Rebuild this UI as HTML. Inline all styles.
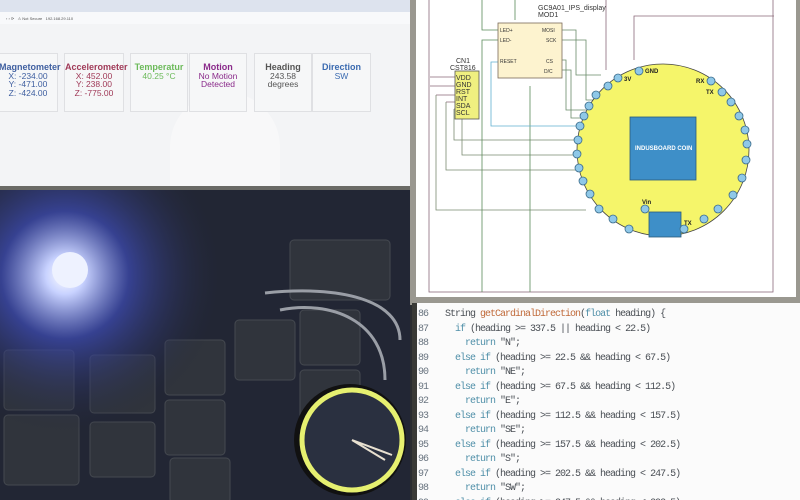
<!DOCTYPE html>
<html><head><meta charset="utf-8"><style>
*{margin:0;padding:0;box-sizing:border-box}
html,body{width:800px;height:500px;overflow:hidden}
body{background:#2a2c30;position:relative;font-family:"Liberation Sans",sans-serif}
.abs{position:absolute}
#web{left:0;top:0;width:410px;height:186px;background:#f3f4f6}
.card{position:absolute;top:53px;height:59px;border:1px solid #dfe0e3;background:#f6f7f8;text-align:center;font-size:8.5px;line-height:8.5px}
.card b{display:block;font-size:9px}
#code{left:412px;top:303px;width:388px;height:197px;background:#fbfbfb;border-left:5px solid #3a3a36;font-family:"Liberation Mono",monospace;font-size:10px;letter-spacing:-1px;color:#4a4f55;overflow:hidden}
.ln{position:absolute;left:1px;color:#6a7580}
.cl{position:absolute;left:28px;white-space:pre}
.fn{color:#c06a3a}.kw{color:#4f8fa8}
</style></head><body>
<div id="web" class="abs">
 <div class="abs" style="left:0;top:0;width:410px;height:12px;background:#dde3ee"></div>
 <div class="abs" style="left:0;top:12px;width:410px;height:12px;background:#f8f9fb;font-size:4px;color:#555;padding:4px 0 0 6px">‹ › ⟳ &nbsp; ⚠ Not Secure &nbsp; 192.168.29.110</div>
 <div class="abs" style="left:170px;top:92px;width:110px;height:94px;border-radius:55px 55px 0 0;background:#f8f8f9"></div>
 <div class="card" style="left:-2px;width:60px;color:#3f5fa0;padding-top:9px"><b>Magnetometer</b>X: -234.00<br>Y: -471.00<br>Z: -424.00</div>
 <div class="card" style="left:64px;width:60px;color:#a03a58;padding-top:9px"><b>Accelerometer</b>X: 452.00<br>Y: 238.00<br>Z: -775.00</div>
 <div class="card" style="left:130px;width:58px;color:#6cba5a;padding-top:9px"><b>Temperatur</b>40.25 °C</div>
 <div class="card" style="left:189px;width:58px;color:#8a2a8a;padding-top:9px"><b>Motion</b>No Motion<br>Detected</div>
 <div class="card" style="left:254px;width:58px;color:#555;padding-top:9px"><b>Heading</b>243.58<br>degrees</div>
 <div class="card" style="left:312px;width:59px;color:#3a6ab0;padding-top:9px"><b>Direction</b>SW</div>
</div>
<div class="abs" style="left:0;top:186px;width:410px;height:4px;background:#6a6a66"></div>
<div class="abs" style="left:0;top:190px;width:410px;height:310px;background:#222634;overflow:hidden">
 <svg width="410" height="310">
  <defs><radialGradient id="g"><stop offset="0" stop-color="#ffffff"/><stop offset=".12" stop-color="#c8d2ff"/><stop offset=".4" stop-color="#3b48a8" stop-opacity=".8"/><stop offset="1" stop-color="#222634" stop-opacity="0"/></radialGradient></defs>
  <g fill="#30343c" stroke="#454950">
   <rect x="4" y="160" width="70" height="60" rx="4"/><rect x="90" y="165" width="65" height="58" rx="4"/>
   <rect x="4" y="225" width="75" height="70" rx="4"/><rect x="90" y="232" width="65" height="55" rx="4"/>
   <rect x="165" y="150" width="60" height="55" rx="4"/><rect x="165" y="210" width="60" height="55" rx="4"/>
   <rect x="170" y="268" width="60" height="45" rx="4"/><rect x="235" y="130" width="60" height="60" rx="4"/>
   <rect x="300" y="120" width="60" height="55" rx="4"/><rect x="300" y="180" width="60" height="50" rx="4"/>
   <rect x="290" y="50" width="100" height="60" rx="4"/>
  </g>
  <circle cx="65" cy="85" r="160" fill="url(#g)"/>
  <circle cx="70" cy="80" r="18" fill="#eef2ff"/>
  <path d="M265 103 C340 95 400 110 400 150 M280 120 C330 110 385 130 385 190" stroke="#9a9ea6" stroke-width="3" fill="none"/>
  <circle cx="350" cy="250" r="56" fill="#111"/>
  <circle cx="352" cy="250" r="50" fill="#2a3040" stroke="#e6f070" stroke-width="5"/>
  <path d="M352 250 L392 265 M352 250 L385 270" stroke="#e8e0d0" stroke-width="2"/>
 </svg>
</div>
<div class="abs" style="left:410px;top:0;width:390px;height:305px;background:#9a9890"></div>
<div class="abs" style="left:416px;top:0;width:380px;height:297px;background:#fff;overflow:hidden">
 <svg width="380" height="297" fill="none" stroke-width="0.8">
  <rect x="13" y="-2" width="344" height="294" stroke="#8a6a7a"/>
  <path d="M14 77 H50 M14 86 H50 M20 95 H50 M30 102 H50 M38 109 H50 M46 116 H50" stroke="#8a6a7a"/>
  <path d="M20 95 V210 H170 M30 102 V170 H180 M38 109 V140 H175 M46 116 V155 H180" stroke="#7a8a70"/>
  <path d="M66 0 V30 H82 M82 40 H66 V292 M99 0 V20 M114 86 V292" stroke="#5a8a5a"/>
  <path d="M82 62 H75 V126 H175" stroke="#60b0d0"/>
  <path d="M142 30 H160 V75 H185 M142 40 H170 V100 H185 M142 60 H150 V110 H170 M142 70 H155 V118 H170" stroke="#6a8a6a"/>
  <path d="M190 0 V70 M218 60 V16 H358" stroke="#8a6a7a"/>
  <rect x="82" y="23" width="64" height="55" fill="#fdf3cf" stroke="#7a6a5a"/>
  <rect x="39" y="71" width="24" height="48" fill="#f0f080" stroke="#555"/>
  <text x="40" y="63" font-size="7" fill="#333" stroke="none" font-family="Liberation Sans">CN1</text>
  <text x="34" y="70" font-size="7" fill="#333" stroke="none" font-family="Liberation Sans">CST816</text>
  <g font-size="7" fill="#333" stroke="none" font-family="Liberation Sans">
   <text x="40" y="80">VDD</text><text x="40" y="87">GND</text><text x="40" y="94">RST</text><text x="40" y="101">INT</text><text x="40" y="108">SDA</text><text x="40" y="115">SCL</text>
   <text x="122" y="10">GC9A01_IPS_display</text><text x="122" y="17">MOD1</text>
   <text x="84" y="32" font-size="5">LED+</text><text x="84" y="42" font-size="5">LED-</text><text x="84" y="63" font-size="5">RESET</text>
   <text x="126" y="32" font-size="5">MOSI</text><text x="130" y="42" font-size="5">SCK</text><text x="130" y="63" font-size="5">CS</text><text x="128" y="73" font-size="5">D/C</text>
  </g>
  <circle cx="247" cy="150" r="86" fill="#f5f56a" stroke="#444"/>
  <rect x="214" y="117" width="66" height="63" fill="#3e8fc8" stroke="#2a5a7a"/>
  <rect x="233" y="212" width="32" height="25" fill="#3e8fc8" stroke="#2a5a7a"/>
  <text x="219" y="150" font-size="6" fill="#fff" stroke="none" font-family="Liberation Sans" font-weight="bold">INDUSBOARD COIN</text>
  <g fill="#8fc8e8" stroke="#3a6a8a">
   <circle cx="223" cy="71" r="4"/><circle cx="202" cy="78" r="4"/><circle cx="192" cy="86" r="4"/><circle cx="180" cy="95" r="4"/><circle cx="173" cy="106" r="4"/><circle cx="168" cy="116" r="4"/><circle cx="164" cy="126" r="4"/><circle cx="162" cy="140" r="4"/><circle cx="161" cy="154" r="4"/><circle cx="163" cy="168" r="4"/><circle cx="167" cy="181" r="4"/><circle cx="174" cy="194" r="4"/><circle cx="183" cy="209" r="4"/><circle cx="197" cy="219" r="4"/><circle cx="213" cy="229" r="4"/><circle cx="229" cy="209" r="4"/><circle cx="268" cy="229" r="4"/><circle cx="288" cy="219" r="4"/><circle cx="302" cy="209" r="4"/><circle cx="317" cy="195" r="4"/><circle cx="326" cy="178" r="4"/><circle cx="330" cy="160" r="4"/><circle cx="331" cy="144" r="4"/><circle cx="329" cy="130" r="4"/><circle cx="323" cy="116" r="4"/><circle cx="315" cy="102" r="4"/><circle cx="306" cy="92" r="4"/><circle cx="295" cy="81" r="4"/>
  </g>
  <g font-size="6" fill="#222" stroke="none" font-family="Liberation Sans" font-weight="bold"><text x="229" y="73">GND</text><text x="208" y="81">3V</text><text x="280" y="83">RX</text><text x="290" y="94">TX</text><text x="226" y="204">Vin</text><text x="268" y="225">TX</text></g>
 </svg>
</div>
<div id="code" class="abs">
 <div class="ln" style="top:6px">86</div><div class="cl" style="top:6px">String <span class="fn">getCardinalDirection</span>(<span class="kw">float</span> heading) {</div>
 <div class="ln" style="top:20.5px">87</div><div class="cl" style="top:20.5px">  <span class="kw">if</span> (heading &gt;= 337.5 || heading &lt; 22.5)</div>
 <div class="ln" style="top:35px">88</div><div class="cl" style="top:35px">    <span class="kw">return</span> "N";</div>
 <div class="ln" style="top:49.5px">89</div><div class="cl" style="top:49.5px">  <span class="kw">else if</span> (heading &gt;= 22.5 &amp;&amp; heading &lt; 67.5)</div>
 <div class="ln" style="top:64px">90</div><div class="cl" style="top:64px">    <span class="kw">return</span> "NE";</div>
 <div class="ln" style="top:78.5px">91</div><div class="cl" style="top:78.5px">  <span class="kw">else if</span> (heading &gt;= 67.5 &amp;&amp; heading &lt; 112.5)</div>
 <div class="ln" style="top:93px">92</div><div class="cl" style="top:93px">    <span class="kw">return</span> "E";</div>
 <div class="ln" style="top:107.5px">93</div><div class="cl" style="top:107.5px">  <span class="kw">else if</span> (heading &gt;= 112.5 &amp;&amp; heading &lt; 157.5)</div>
 <div class="ln" style="top:122px">94</div><div class="cl" style="top:122px">    <span class="kw">return</span> "SE";</div>
 <div class="ln" style="top:136.5px">95</div><div class="cl" style="top:136.5px">  <span class="kw">else if</span> (heading &gt;= 157.5 &amp;&amp; heading &lt; 202.5)</div>
 <div class="ln" style="top:151px">96</div><div class="cl" style="top:151px">    <span class="kw">return</span> "S";</div>
 <div class="ln" style="top:165.5px">97</div><div class="cl" style="top:165.5px">  <span class="kw">else if</span> (heading &gt;= 202.5 &amp;&amp; heading &lt; 247.5)</div>
 <div class="ln" style="top:180px">98</div><div class="cl" style="top:180px">    <span class="kw">return</span> "SW";</div>
 <div class="ln" style="top:194.5px">99</div><div class="cl" style="top:194.5px">  <span class="kw">else if</span> (heading &gt;= 247.5 &amp;&amp; heading &lt; 292.5)</div>
</div>
</body></html>
